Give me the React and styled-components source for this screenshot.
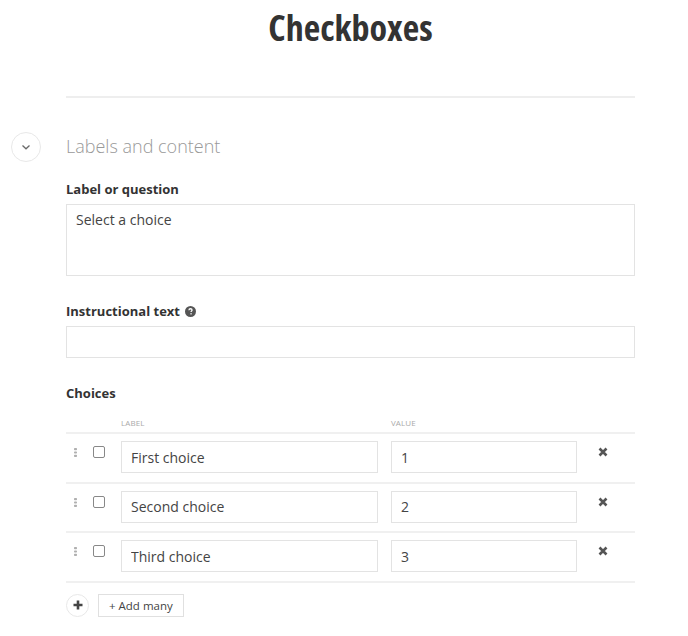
import styled, { createGlobalStyle } from "styled-components";

const GlobalStyle = createGlobalStyle`
  body {
    margin: 0;
    background: #ffffff;
    font-family: "Open Sans", "Liberation Sans", sans-serif;
    color: #444444;
  }
`;

const choices = [
  { label: "First choice", value: "1" },
  { label: "Second choice", value: "2" },
  { label: "Third choice", value: "3" },
];

const ChevronDown = () => (
  <svg width="12" height="12" viewBox="0 0 12 12">
    <path d="M2.5 4.6 L6 7.8 L9.5 4.6" fill="none" stroke="#6a6a6a" strokeWidth="1.3" />
  </svg>
);

const HelpIcon = () => (
  <svg width="11" height="11" viewBox="0 0 12 12">
    <circle cx="6" cy="6" r="6" fill="#555" />
    <path
      d="M4.3 4.6 C4.3 3.5 5 3 6 3 C7 3 7.7 3.6 7.7 4.4 C7.7 5.4 6.6 5.5 6.6 6.6"
      fill="none"
      stroke="#fff"
      strokeWidth="1.4"
    />
    <rect x="5.9" y="7.8" width="1.4" height="1.4" fill="#fff" />
  </svg>
);

const DragHandle = () => (
  <svg width="3" height="9" viewBox="0 0 3 9">
    <rect x="0" y="0" width="3" height="2.2" rx="0.8" fill="#b0b0b0" />
    <rect x="0" y="3.4" width="3" height="2.2" rx="0.8" fill="#b0b0b0" />
    <rect x="0" y="6.8" width="3" height="2.2" rx="0.8" fill="#b0b0b0" />
  </svg>
);

const RemoveIcon = () => (
  <svg width="10" height="10" viewBox="0 0 10 10">
    <path d="M1.5 1.5 L8.5 8.5 M8.5 1.5 L1.5 8.5" stroke="#555" strokeWidth="2.6" />
  </svg>
);

const PlusIcon = () => (
  <svg width="10" height="10" viewBox="0 0 10 10">
    <path d="M5 0.5 V9.5 M0.5 5 H9.5" stroke="#444" strokeWidth="2.6" />
  </svg>
);

const App = () => {
  return (
    <Page>
      <GlobalStyle />
      <Title>Checkboxes</Title>
      <Divider />
      <Section>
        <SectionHead>
          <Toggle>
            <ChevronDown />
          </Toggle>
          <SectionTitle>Labels and content</SectionTitle>
        </SectionHead>

        <Field>
          <FieldLabel>Label or question</FieldLabel>
          <TextArea defaultValue="Select a choice" spellCheck="false" />
        </Field>

        <Field>
          <FieldLabel>
            Instructional text <HelpIcon />
          </FieldLabel>
          <TextInput />
        </Field>

        <Field>
          <FieldLabel>Choices</FieldLabel>
          <ChoiceTable>
            <HeadRow>
              <span />
              <span />
              <ColHead>Label</ColHead>
              <ColHead>Value</ColHead>
            </HeadRow>
            {choices.map((c) => (
              <ChoiceRow key={c.value}>
                <Handle>
                  <DragHandle />
                </Handle>
                <Box />
                <CellInput defaultValue={c.label} spellCheck="false" />
                <CellInput defaultValue={c.value} spellCheck="false" />
                <Remove>
                  <RemoveIcon />
                </Remove>
              </ChoiceRow>
            ))}
          </ChoiceTable>
          <AddBar>
            <AddRound>
              <PlusIcon />
            </AddRound>
            <AddMany>+ Add many</AddMany>
          </AddBar>
        </Field>
      </Section>
    </Page>
  );
};

const Page = styled.div`
  width: 569px;
  margin-left: 66px;
  padding-top: 3px;
`;

const Title = styled.h1`
  margin: 0;
  text-align: center;
  font-family: "Open Sans", "Liberation Sans", sans-serif;
  font-stretch: 82%;
  font-weight: 700;
  font-size: 36px;
  line-height: 50px;
  color: #333333;
`;

const Divider = styled.hr`
  margin: 43px 0 0;
  border: none;
  border-top: 2px solid #eeeeee;
`;

const Section = styled.div`
  padding-top: 33px;
`;

const SectionHead = styled.div`
  position: relative;
  height: 30px;
  display: flex;
  align-items: center;
`;

const Toggle = styled.div`
  position: absolute;
  left: -55px;
  top: 1px;
  box-sizing: border-box;
  width: 30px;
  height: 30px;
  border: 1px solid #e8e8e8;
  border-radius: 50%;
  display: flex;
  align-items: center;
  justify-content: center;
`;

const SectionTitle = styled.h2`
  margin: 0;
  font-weight: 300;
  font-size: 18px;
  color: #999999;
`;

const Field = styled.div`
  margin-top: 19px;
  & + & {
    margin-top: 26px;
  }
`;

const FieldLabel = styled.div`
  display: flex;
  align-items: center;
  gap: 5px;
  font-weight: 700;
  font-size: 13px;
  line-height: 18px;
  color: #333333;
  margin-bottom: 6px;
`;

const TextArea = styled.textarea`
  display: block;
  box-sizing: border-box;
  width: 100%;
  height: 72px;
  margin: 0;
  padding: 6px 9px;
  resize: none;
  border: 1px solid #e3e3e3;
  border-radius: 0;
  font-family: "Open Sans", "Liberation Sans", sans-serif;
  font-size: 14px;
  line-height: 18px;
  color: #444444;
  &:focus {
    outline: none;
  }
`;

const TextInput = styled.input`
  display: block;
  box-sizing: border-box;
  width: 100%;
  height: 32px;
  margin: 0;
  padding: 0 9px;
  border: 1px solid #e3e3e3;
  font-family: "Open Sans", "Liberation Sans", sans-serif;
  font-size: 14px;
  color: #444444;
  &:focus {
    outline: none;
  }
`;

const ChoiceTable = styled.div`
  margin-top: 10px;
  border-bottom: 2px solid #f0f0f0;
`;

const HeadRow = styled.div`
  display: grid;
  grid-template-columns: 21px 34px 270px 1fr;
  height: 20px;
  padding-top: 4px;
  box-sizing: border-box;
`;

const ColHead = styled.span`
  font-size: 8px;
  line-height: 14px;
  color: #aaaaaa;
  text-transform: uppercase;
  letter-spacing: 0.1px;
`;

const ChoiceRow = styled.div`
  display: grid;
  grid-template-columns: 21px 34px 257px 13px 186px 1fr;
  align-items: start;
  height: 49.5px;
  padding-top: 7px;
  box-sizing: border-box;
  border-top: 2px solid #f0f0f0;
  & > input:nth-of-type(2) {
    grid-column: 5;
  }
`;

const Handle = styled.div`
  padding: 7px 0 0 8px;
  line-height: 0;
`;

const Box = styled.span`
  box-sizing: border-box;
  width: 12px;
  height: 12px;
  margin: 5px 0 0 6px;
  border: 1px solid #888888;
  border-radius: 2px;
  background: #ffffff;
`;

const CellInput = styled.input`
  box-sizing: border-box;
  width: 100%;
  height: 32px;
  margin: 0;
  padding: 0 9px;
  border: 1px solid #e3e3e3;
  font-family: "Open Sans", "Liberation Sans", sans-serif;
  font-size: 14px;
  color: #444444;
  &:focus {
    outline: none;
  }
`;

const Remove = styled.div`
  grid-column: 6;
  padding: 6px 0 0 21px;
  line-height: 0;
`;

const AddBar = styled.div`
  display: flex;
  align-items: center;
  gap: 9px;
  margin-top: 11px;
`;

const AddRound = styled.div`
  box-sizing: border-box;
  width: 23px;
  height: 23px;
  border: 1px solid #e8e8e8;
  border-radius: 50%;
  display: flex;
  align-items: center;
  justify-content: center;
`;

const AddMany = styled.button`
  height: 23px;
  padding: 0 10px;
  background: #ffffff;
  border: 1px solid #e0e0e0;
  border-radius: 0;
  font-family: "Open Sans", "Liberation Sans", sans-serif;
  font-size: 11.5px;
  color: #444444;
`;

export default App;
